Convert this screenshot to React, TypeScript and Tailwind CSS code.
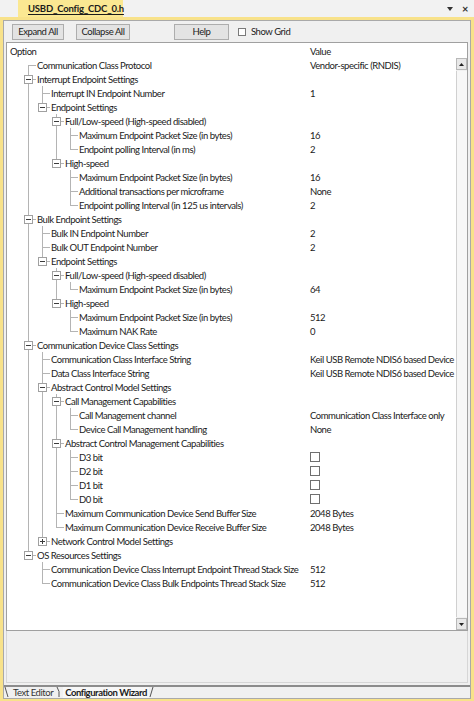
import React from 'react'

type Node = {
    label: string
    value?: string
    check?: boolean
    collapsed?: boolean
    children?: Node[]
}

type Row = {
    label: string
    value?: string
    check?: boolean
    level: number
    guides: boolean[]
    last: boolean
    first: boolean
    kids: boolean
    collapsed: boolean
}

const tree: Node[] = [
    { label: 'Communication Class Protocol', value: 'Vendor-specific (RNDIS)' },
    {
        label: 'Interrupt Endpoint Settings',
        children: [
            { label: 'Interrupt IN Endpoint Number', value: '1' },
            {
                label: 'Endpoint Settings',
                children: [
                    {
                        label: 'Full/Low-speed (High-speed disabled)',
                        children: [
                            { label: 'Maximum Endpoint Packet Size (in bytes)', value: '16' },
                            { label: 'Endpoint polling Interval (in ms)', value: '2' },
                        ],
                    },
                    {
                        label: 'High-speed',
                        children: [
                            { label: 'Maximum Endpoint Packet Size (in bytes)', value: '16' },
                            { label: 'Additional transactions per microframe', value: 'None' },
                            { label: 'Endpoint polling Interval (in 125 us intervals)', value: '2' },
                        ],
                    },
                ],
            },
        ],
    },
    {
        label: 'Bulk Endpoint Settings',
        children: [
            { label: 'Bulk IN Endpoint Number', value: '2' },
            { label: 'Bulk OUT Endpoint Number', value: '2' },
            {
                label: 'Endpoint Settings',
                children: [
                    {
                        label: 'Full/Low-speed (High-speed disabled)',
                        children: [{ label: 'Maximum Endpoint Packet Size (in bytes)', value: '64' }],
                    },
                    {
                        label: 'High-speed',
                        children: [
                            { label: 'Maximum Endpoint Packet Size (in bytes)', value: '512' },
                            { label: 'Maximum NAK Rate', value: '0' },
                        ],
                    },
                ],
            },
        ],
    },
    {
        label: 'Communication Device Class Settings',
        children: [
            { label: 'Communication Class Interface String', value: 'Keil USB Remote NDIS6 based Device' },
            { label: 'Data Class Interface String', value: 'Keil USB Remote NDIS6 based Device' },
            {
                label: 'Abstract Control Model Settings',
                children: [
                    {
                        label: 'Call Management Capabilities',
                        children: [
                            { label: 'Call Management channel', value: 'Communication Class Interface only' },
                            { label: 'Device Call Management handling', value: 'None' },
                        ],
                    },
                    {
                        label: 'Abstract Control Management Capabilities',
                        children: [
                            { label: 'D3 bit', check: true },
                            { label: 'D2 bit', check: true },
                            { label: 'D1 bit', check: true },
                            { label: 'D0 bit', check: true },
                        ],
                    },
                    { label: 'Maximum Communication Device Send Buffer Size', value: '2048 Bytes' },
                    { label: 'Maximum Communication Device Receive Buffer Size', value: '2048 Bytes' },
                ],
            },
            { label: 'Network Control Model Settings', collapsed: true, children: [] },
        ],
    },
    {
        label: 'OS Resources Settings',
        children: [
            { label: 'Communication Device Class Interrupt Endpoint Thread Stack Size', value: '512' },
            { label: 'Communication Device Class Bulk Endpoints Thread Stack Size', value: '512' },
        ],
    },
]

function flatten(nodes: Node[], level: number, guides: boolean[], out: Row[]) {
    nodes.forEach((n, i) => {
        const last = i === nodes.length - 1
        out.push({
            label: n.label,
            value: n.value,
            check: n.check,
            level,
            guides,
            last,
            first: level === 0 && i === 0,
            kids: !!n.children,
            collapsed: !!n.collapsed,
        })
        if (n.children && !n.collapsed) flatten(n.children, level + 1, [...guides, !last], out)
    })
}

const rows: Row[] = []
flatten(tree, 0, [], rows)

function TreeRow({ r }: { r: Row }) {
    return (
        <div className="flex h-[14px] items-center">
            <div className="flex w-[303px] shrink-0 items-center pl-[14px]">
                {r.guides.map((on, i) => (
                    <div key={i} className="relative h-[14px] w-[14px] shrink-0">
                        {on && <span className="absolute left-[7px] top-0 h-[14px] w-px bg-[#b4b4b4]" />}
                    </div>
                ))}
                <div className="relative h-[14px] w-[14px] shrink-0">
                    {r.first ? (
                        <span className="absolute left-[7px] top-[7px] h-[7px] w-px bg-[#b4b4b4]" />
                    ) : r.last ? (
                        <span className="absolute left-[7px] top-0 h-[7px] w-px bg-[#b4b4b4]" />
                    ) : (
                        <span className="absolute left-[7px] top-0 h-[14px] w-px bg-[#b4b4b4]" />
                    )}
                    <span className="absolute left-[7px] top-[7px] h-px w-[8px] bg-[#b4b4b4]" />
                    {r.kids && (
                        <span className="absolute left-[3px] top-[3px] h-[9px] w-[9px] border border-[#a0a0a0] bg-white">
                            <span className="absolute left-[1px] top-[3px] h-px w-[5px] bg-[#3c3c3c]" />
                            {r.collapsed && <span className="absolute left-[3px] top-[1px] h-[5px] w-px bg-[#3c3c3c]" />}
                        </span>
                    )}
                </div>
                <span className="ml-[2px] whitespace-nowrap pt-[2px]">{r.label}</span>
            </div>
            <div className="flex-1 whitespace-nowrap">
                {r.check ? (
                    <span className="block h-[10px] w-[10px] border border-[#6f6f6f] bg-white" />
                ) : (
                    <span className="block pt-[2px]">{r.value}</span>
                )}
            </div>
        </div>
    )
}

function Button({ label, w }: { label: string; w: string }) {
    return (
        <div className={`flex h-[16px] items-center justify-center border border-[#adadad] bg-[#e3e3e3] pt-[1px] ${w}`}>
            {label}
        </div>
    )
}

export default function App() {
    return (
        <div className="flex h-[701px] w-[474px] flex-col bg-[#f2f2f2] font-['Lato','Noto_Sans',sans-serif] text-[9.5px] leading-none tracking-[-0.45px] text-[#1b1b1b]">
            {/* document tab strip */}
            <div className="flex h-[17px] shrink-0 items-end">
                <div className="ml-[18px] flex h-[17px] w-[105px] items-center gap-[7px] bg-[#fbe892] pl-[3px]">
                    <svg width="9" height="11" viewBox="0 0 9 11">
                        <path d="M0.5 0.5 H5.5 L8.5 3.5 V10.5 H0.5 Z" fill="#fff" stroke="#7a7a7a" />
                        <path d="M5.5 0.5 V3.5 H8.5" fill="none" stroke="#7a7a7a" />
                    </svg>
                    <span className="whitespace-nowrap text-[9.5px] font-bold tracking-[-0.2px] underline decoration-1 underline-offset-2">
                        USBD_Config_CDC_0.h
                    </span>
                </div>
                <div className="ml-auto flex h-[17px] items-center gap-[9px] pr-[6px] text-[#333]">
                    <svg width="6" height="4" viewBox="0 0 6 4">
                        <path d="M0 0 H6 L3 4 Z" fill="#333" />
                    </svg>
                    <span className="text-[11px] font-bold">×</span>
                </div>
            </div>

            {/* yellow frame */}
            <div className="flex flex-1 flex-col bg-[#f8e28a] px-[3px] pb-[4px] pt-[3px]">
                <div className="flex flex-1 flex-col border border-[#a9a9a9] bg-[#f0f0f0]">
                    {/* toolbar */}
                    <div className="flex h-[21px] shrink-0 items-center pl-[8px]">
                        <Button label="Expand All" w="w-[52px]" />
                        <div className="ml-[12px]">
                            <Button label="Collapse All" w="w-[54px]" />
                        </div>
                        <div className="ml-[44px]">
                            <Button label="Help" w="w-[55px]" />
                        </div>
                        <div className="ml-[9px] flex items-center gap-[5px]">
                            <span className="block h-[8px] w-[8px] border border-[#7a7a7a] bg-white" />
                            <span className="pt-[1px]">Show Grid</span>
                        </div>
                    </div>

                    {/* option list */}
                    <div className="mx-[2px] flex h-[589px] shrink-0 flex-col border border-[#a0a0a0] bg-white">
                        <div className="flex h-[15px] shrink-0 items-center pt-[2px]">
                            <div className="w-[303px] pl-[3px]">Option</div>
                            <div>Value</div>
                        </div>
                        <div className="flex flex-1">
                            <div className="flex-1">
                                {rows.map((r, i) => (
                                    <TreeRow key={i} r={r} />
                                ))}
                            </div>
                            {/* scrollbar */}
                            <div className="flex w-[11px] flex-col bg-[#f0f0f0]">
                                <div className="flex h-[12px] items-center justify-center border border-[#b8b8b8] bg-[#e8e8e8]">
                                    <svg width="5" height="3" viewBox="0 0 5 3">
                                        <path d="M0 3 H5 L2.5 0 Z" fill="#222" />
                                    </svg>
                                </div>
                                <div className="my-[1px] flex-1 border-l border-[#d0d0d0] bg-[#f7f7f7]" />
                                <div className="flex h-[12px] items-center justify-center border border-[#b8b8b8] bg-[#e8e8e8]">
                                    <svg width="5" height="3" viewBox="0 0 5 3">
                                        <path d="M0 0 H5 L2.5 3 Z" fill="#222" />
                                    </svg>
                                </div>
                            </div>
                        </div>
                    </div>

                    {/* description pane */}
                    <div className="mx-[2px] h-[52px] shrink-0 border-x border-b border-[#d6d6d6] bg-[#f0f0f0]" />

                    {/* bottom tabs */}
                    <div className="mt-[2px] flex flex-1 items-start border-t-2 border-[#8c8c8c]">
                        <svg width="6" height="10" viewBox="0 0 6 10">
                            <path d="M1 0 L4 10" stroke="#555" fill="none" />
                        </svg>
                        <span className="px-[3px] pt-[1px] text-[#333]">Text Editor</span>
                        <svg width="7" height="10" viewBox="0 0 7 10">
                            <path d="M1 0 Q4 4 3 10" stroke="#555" fill="none" />
                        </svg>
                        <span className="bg-[#f7f7f7] px-[2px] pt-[1px] font-bold">Configuration Wizard</span>
                        <svg width="6" height="10" viewBox="0 0 6 10">
                            <path d="M1 10 L4 0" stroke="#555" fill="none" />
                        </svg>
                    </div>
                </div>
            </div>
        </div>
    )
}
